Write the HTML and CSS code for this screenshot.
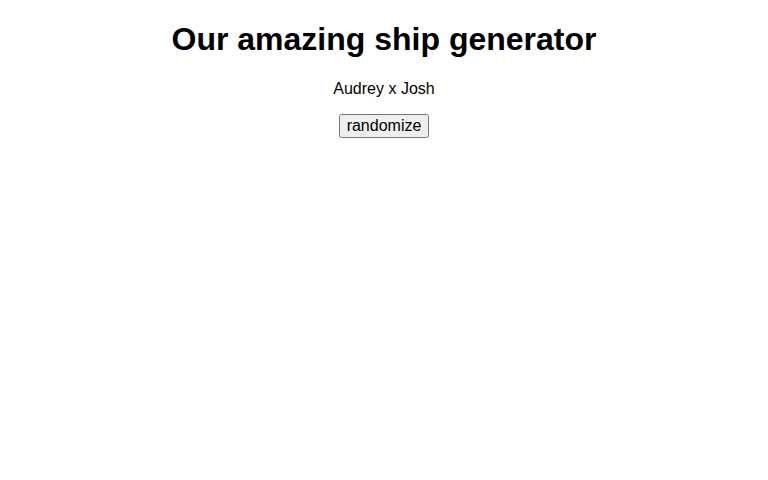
FILE: index.html
```html
<!DOCTYPE html>
<html lang="en">
<head>
    <meta charset="UTF-8">
    <meta name="viewport" content="width=device-width, initial-scale=1.0">
    <title>Ship Generator</title>
    <link rel="stylesheet" href="styles.css">
</head>
<body>
    <div class="app">
        <h1>Our amazing ship generator</h1>
        <p id="ship">Audrey x Josh</p>
        <button id="randomizeBtn">randomize</button>
    </div>

    <script>
        const names = ['Audrey', 'Josh', 'Maya', 'Leo', 'Priya', 'Sam', 'Nina', 'Omar'];
        const ship = document.getElementById('ship');
        const randomizeBtn = document.getElementById('randomizeBtn');

        function pick(exclude) {
            let name;
            do {
                name = names[Math.floor(Math.random() * names.length)];
            } while (name === exclude);
            return name;
        }

        randomizeBtn.addEventListener('click', () => {
            const first = pick();
            ship.textContent = `${first} x ${pick(first)}`;
        });
    </script>
</body>
</html>
```

FILE: styles.css
```css
body {
    margin: 0;
    font-family: 'Liberation Sans', Arial, sans-serif;
    background: white;
    color: black;
}

.app {
    text-align: center;
}

button {
    font-family: 'Liberation Sans', Arial, sans-serif;
    font-size: 16px;
}
```
